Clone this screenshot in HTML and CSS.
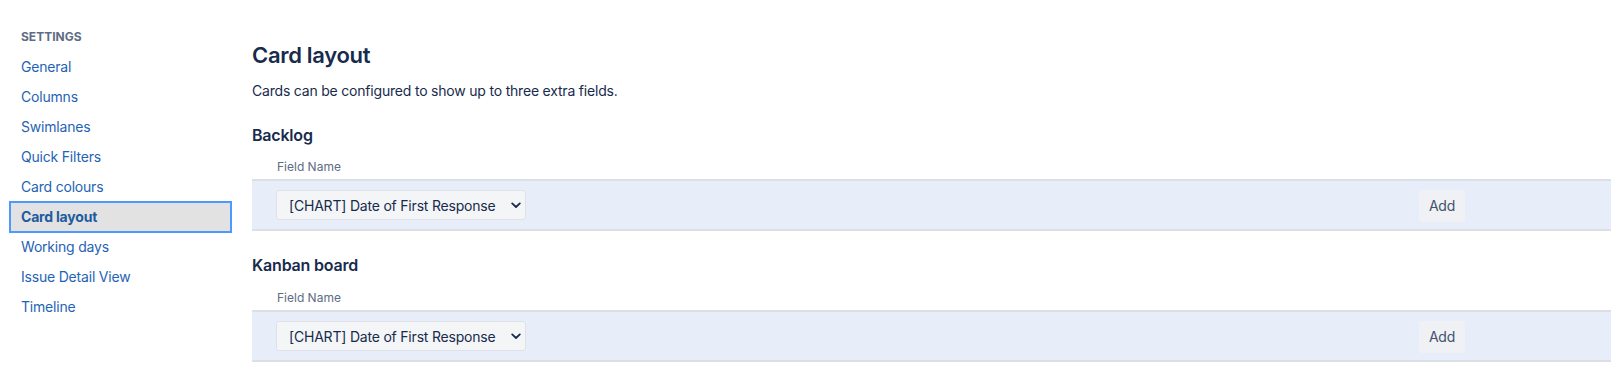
FILE: index.html
```html
<!DOCTYPE html>
<html lang="en">
<head>
<meta charset="utf-8">
<title>Card layout</title>
<link rel="stylesheet" href="styles.css">
</head>
<body>
<div class="page">
  <nav class="sidebar">
    <div class="sidebar-title">SETTINGS</div>
    <a class="nav-item" href="#">General</a>
    <a class="nav-item" href="#">Columns</a>
    <a class="nav-item" href="#">Swimlanes</a>
    <a class="nav-item" href="#">Quick Filters</a>
    <a class="nav-item" href="#">Card colours</a>
    <a class="nav-item active" href="#">Card layout</a>
    <a class="nav-item" href="#">Working days</a>
    <a class="nav-item" href="#">Issue Detail View</a>
    <a class="nav-item" href="#">Timeline</a>
  </nav>
  <main class="content">
    <h1 class="title">Card layout</h1>
    <p class="desc">Cards can be configured to show up to three extra fields.</p>

    <section class="block">
      <h2 class="block-title">Backlog</h2>
      <div class="table-head">Field Name</div>
      <div class="table-row">
        <div class="cell">
          <div class="select">
            <span class="select-text">[CHART] Date of First Response</span>
            <svg class="chev" width="10" height="10" viewBox="0 0 10 10"><path d="M1.2 3.4 5 7 8.8 3.4" fill="none" stroke="#172b4d" stroke-width="1.8" stroke-linecap="round" stroke-linejoin="round"/></svg>
          </div>
        </div>
        <div class="cell"><button class="btn">Add</button></div>
      </div>
    </section>

    <section class="block">
      <h2 class="block-title">Kanban board</h2>
      <div class="table-head">Field Name</div>
      <div class="table-row">
        <div class="cell">
          <div class="select">
            <span class="select-text">[CHART] Date of First Response</span>
            <svg class="chev" width="10" height="10" viewBox="0 0 10 10"><path d="M1.2 3.4 5 7 8.8 3.4" fill="none" stroke="#172b4d" stroke-width="1.8" stroke-linecap="round" stroke-linejoin="round"/></svg>
          </div>
        </div>
        <div class="cell"><button class="btn">Add</button></div>
      </div>
    </section>
  </main>
</div>
</body>
</html>
```

FILE: styles.css
```css
* { box-sizing: border-box; }

html, body {
  margin: 0;
  padding: 0;
  background: #ffffff;
}

body {
  font-family: Inter, "Noto Sans", "Liberation Sans", sans-serif;
  color: #172b4d;
  font-size: 14px;
  letter-spacing: -0.2px;
}

.page {
  display: flex;
  align-items: flex-start;
  padding: 0 13px 0 9px;
}

.sidebar {
  width: 223px;
  flex: none;
  display: flex;
  flex-direction: column;
  padding-top: 29px;
}

.sidebar-title {
  font-size: 12px;
  font-weight: 700;
  color: #5e6c84;
  letter-spacing: 0;
  height: 16px;
  line-height: 16px;
  padding-left: 12px;
  margin-bottom: 7px;
}

.nav-item {
  display: block;
  height: 30px;
  line-height: 26px;
  border: 2px solid transparent;
  padding-left: 10px;
  color: #1f63b5;
  text-decoration: none;
  font-size: 14px;
}

.nav-item.active {
  height: 32px;
  line-height: 28px;
  margin: -1px 0;
  background: #e2e2e2;
  border-color: #4c9aff;
  font-weight: 700;
  color: #215b9f;
}

.content {
  flex: 1;
  margin-left: 20px;
  padding-top: 39px;
}

.title {
  margin: 0;
  font-size: 22px;
  font-weight: 600;
  line-height: 32px;
  height: 32px;
  letter-spacing: -0.3px;
}

.desc {
  margin: 10px 0 0;
  line-height: 20px;
  font-size: 14px;
}

.block-title {
  margin: 0;
  font-size: 16px;
  font-weight: 600;
  line-height: 22px;
}

.block { margin-top: 23px; }
.block + .block { margin-top: 23px; }

.table-head {
  margin-top: 13px;
  padding-left: 25px;
  font-size: 12px;
  color: #5e6c84;
  line-height: 16px;
  height: 20px;
  letter-spacing: 0;
}

.block + .block .table-head {
  margin-top: 14px;
}

.table-row {
  display: grid;
  grid-template-columns: 1fr 192px;
  align-items: center;
  background: #e7eefa;
  border-top: 2px solid #dcdfe4;
  border-bottom: 2px solid #dcdfe4;
  height: 52px;
}

.cell {
  display: flex;
  align-items: center;
}

.cell:first-child { padding-left: 24px; }

.select {
  width: 250px;
  height: 30px;
  display: flex;
  align-items: center;
  justify-content: space-between;
  background: #f4f5f7;
  border: 1px solid #dfe1e6;
  border-radius: 3px;
  padding: 0 4px 0 12px;
}

.select-text {
  font-size: 14px;
  color: #172b4d;
  white-space: nowrap;
}

.chev { flex: none; }

.btn {
  font-family: inherit;
  font-size: 14px;
  letter-spacing: -0.2px;
  color: #42526e;
  background: #f0f1f4;
  border: none;
  border-radius: 3px;
  height: 32px;
  width: 46px;
  padding: 0;
  margin-top: 1px;
  cursor: pointer;
}
```
